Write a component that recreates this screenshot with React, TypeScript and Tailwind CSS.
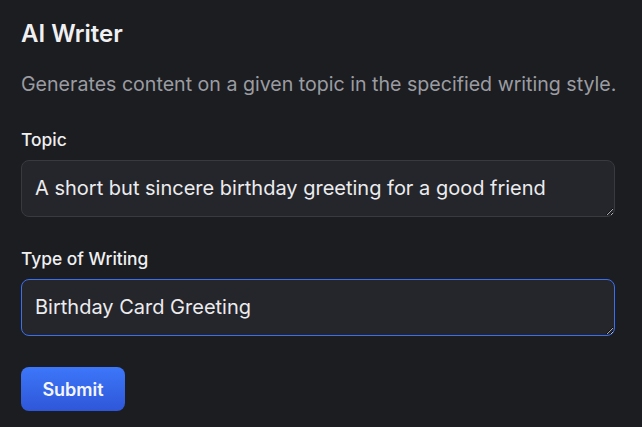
export default function App() {
  return (
    <div className="min-h-[427px] bg-[#1c1d21] px-[21px] pt-[18px] font-['Inter',sans-serif] text-[#ececee]">
      <h1 className="text-[24px] font-semibold leading-8 text-[#f0f0f2]">AI Writer</h1>
      <p className="mt-5 whitespace-nowrap text-[19.6px] leading-7 text-[#9b9ca1]">
        Generates content on a given topic in the specified writing style.
      </p>

      <form className="mt-[30px] w-[594px]" onSubmit={(e) => e.preventDefault()}>
        <label className="block text-[17.4px] font-medium leading-6 text-[#f0f0f2]">Topic</label>
        <textarea
          rows={1}
          defaultValue="A short but sincere birthday greeting for a good friend"
          className="mt-2 block w-full rounded-lg border border-[#393a40] bg-[#25262c] px-[13px] py-[14px] text-[20px] leading-[27px] text-[#ececee] outline-none"
        />

        <label className="mt-[30px] block text-[17.4px] font-medium leading-6 text-[#f0f0f2]">Type of Writing</label>
        <textarea
          rows={1}
          autoFocus
          defaultValue="Birthday Card Greeting"
          className="mt-2 block w-full rounded-lg border border-[#3a6ff0] bg-[#25262c] px-[13px] py-[14px] text-[20px] leading-[27px] text-[#ececee] caret-white outline-none"
        />

        <button
          type="submit"
          className="mt-[31px] h-11 w-[104px] rounded-lg bg-gradient-to-b from-[#3d77fa] to-[#2f56d8] text-[18px] font-semibold text-[#f4f6ff]"
        >
          Submit
        </button>
      </form>
    </div>
  )
}
